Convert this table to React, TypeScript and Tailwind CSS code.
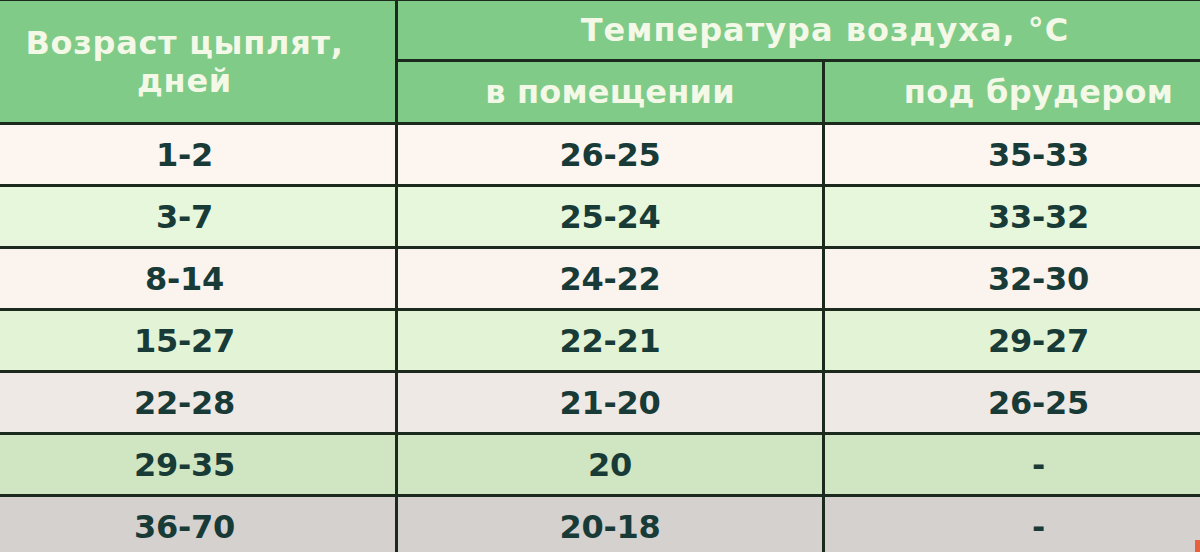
const rows: { age: string; room: string; brooder: string; bg: string }[] = [
  { age: '1-2', room: '26-25', brooder: '35-33', bg: 'bg-[#fdf5ef]' },
  { age: '3-7', room: '25-24', brooder: '33-32', bg: 'bg-[#e7f7db]' },
  { age: '8-14', room: '24-22', brooder: '32-30', bg: 'bg-[#fbf3ed]' },
  { age: '15-27', room: '22-21', brooder: '29-27', bg: 'bg-[#e3f3d5]' },
  { age: '22-28', room: '21-20', brooder: '26-25', bg: 'bg-[#efe9e5]' },
  { age: '29-35', room: '20', brooder: '-', bg: 'bg-[#d0e5c1]' },
  { age: '36-70', room: '20-18', brooder: '-', bg: 'bg-[#d5d1ce]' },
];

const line = 'border-[#1c2a1e]';

export default function App() {
  return (
    <div
      className="relative h-[552px] w-[1200px] overflow-hidden bg-[#d5d1ce]"
      style={{ fontFamily: '"DejaVu Sans", Verdana, sans-serif' }}
    >
      <div className={`ml-[-26px] w-[1278px] border-t ${line}`}>
        {/* header */}
        <div className={`flex bg-[#7fcb87] font-bold text-[32px] text-[#f3f8e7] border-b-[3px] ${line}`}>
          <div className={`flex h-[121px] w-[424px] shrink-0 flex-col items-center justify-center border-r-[3px] ${line} text-center leading-[38px] tracking-[0.7px]`}>
            <span>Возраст цыплят,</span>
            <span>дней</span>
          </div>
          <div className="flex flex-1 flex-col">
            <div className={`flex h-[61px] items-center justify-center border-b-[3px] ${line} tracking-[1px]`}>
              Температура воздуха, °C
            </div>
            <div className="flex h-[60px]">
              <div className={`flex w-[427px] shrink-0 items-center justify-center border-r-[3px] ${line} tracking-[0.2px]`}>
                в помещении
              </div>
              <div className="flex flex-1 items-center justify-center tracking-[0.3px]">под брудером</div>
            </div>
          </div>
        </div>

        {/* body */}
        {rows.map((r) => (
          <div
            key={r.age}
            className={`flex h-[62px] border-b-[3px] ${line} ${r.bg} font-bold text-[32px] tracking-[-0.3px] text-[#183b37]`}
          >
            <div className={`flex w-[424px] shrink-0 items-center justify-center border-r-[3px] ${line}`}>
              {r.age}
            </div>
            <div className={`flex w-[427px] shrink-0 items-center justify-center border-r-[3px] ${line}`}>
              {r.room}
            </div>
            <div className="flex flex-1 items-center justify-center">{r.brooder}</div>
          </div>
        ))}
      </div>
      <div className="absolute bottom-0 right-0 h-[12px] w-[5px] bg-[#e8613c]" />
    </div>
  );
}
